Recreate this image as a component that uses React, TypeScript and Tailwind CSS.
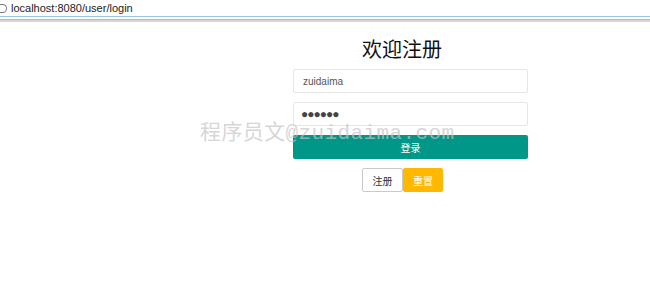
export default function App() {
  return (
    <div className="relative w-[650px] h-[283px] overflow-hidden bg-white font-['Microsoft_YaHei','Noto_Sans_CJK_SC',sans-serif]">
      {/* browser address bar */}
      <div className="h-[17px] flex items-center gap-[4px] border-b border-[#9cc3ea]">
        <span className="w-[7px] h-[9px] rounded-r-full border border-l-0 border-[#777]" />
        <span className="text-[11px] text-[#222] font-['Liberation_Sans','Noto_Sans_CJK_SC',sans-serif] leading-none">
          localhost:8080/user/login
        </span>
      </div>
      <div className="h-[2px]" />
      <div className="h-[3px] bg-[#d6d6d6] border-t border-[#b9b9b9]" />

      {/* form */}
      <div className="ml-[293px] w-[235px] pt-[15px]">
        <h1 className="ml-[69px] text-[20px] leading-[24px] text-[#111] font-['Noto_Sans_CJK_SC',sans-serif]">
          欢迎注册
        </h1>
        <div className="mt-[8px] h-[24px] border border-[#e6e6e6] rounded-[2px] flex items-center px-[9px] text-[10px] text-[#555] font-['Liberation_Sans',sans-serif]">
          zuidaima
        </div>
        <div className="mt-[9px] h-[24px] border border-[#e6e6e6] rounded-[2px] flex items-center px-[7px] text-[12px] tracking-[-1px] text-[#444] font-['Liberation_Sans',sans-serif]">
          ●●●●●●
        </div>
        <div className="mt-[9px] h-[24px] bg-[#009688] rounded-[2px] flex items-center justify-center text-[10px] text-white font-['Noto_Sans_CJK_SC',sans-serif]">
          登录
        </div>
        <div className="mt-[9px] ml-[69px] flex">
          <div className="w-[41px] h-[24px] border border-[#c9c9c9] rounded-[2px] flex items-center justify-center text-[10px] text-[#333] font-['Noto_Sans_CJK_SC',sans-serif]">
            注册
          </div>
          <div className="w-[40px] h-[24px] bg-[#ffb800] rounded-[2px] flex items-center justify-center text-[10px] text-white font-['Noto_Sans_CJK_SC',sans-serif]">
            重置
          </div>
        </div>
      </div>

      {/* watermark */}
      <div className="absolute left-[200px] top-[122px] text-[21px] leading-[24px] tracking-[0.4px] text-[#c4c4c4]/70 font-['Liberation_Mono','Noto_Sans_CJK_SC',monospace] whitespace-nowrap pointer-events-none">
        程序员文@zuidaima.com
      </div>
    </div>
  );
}
